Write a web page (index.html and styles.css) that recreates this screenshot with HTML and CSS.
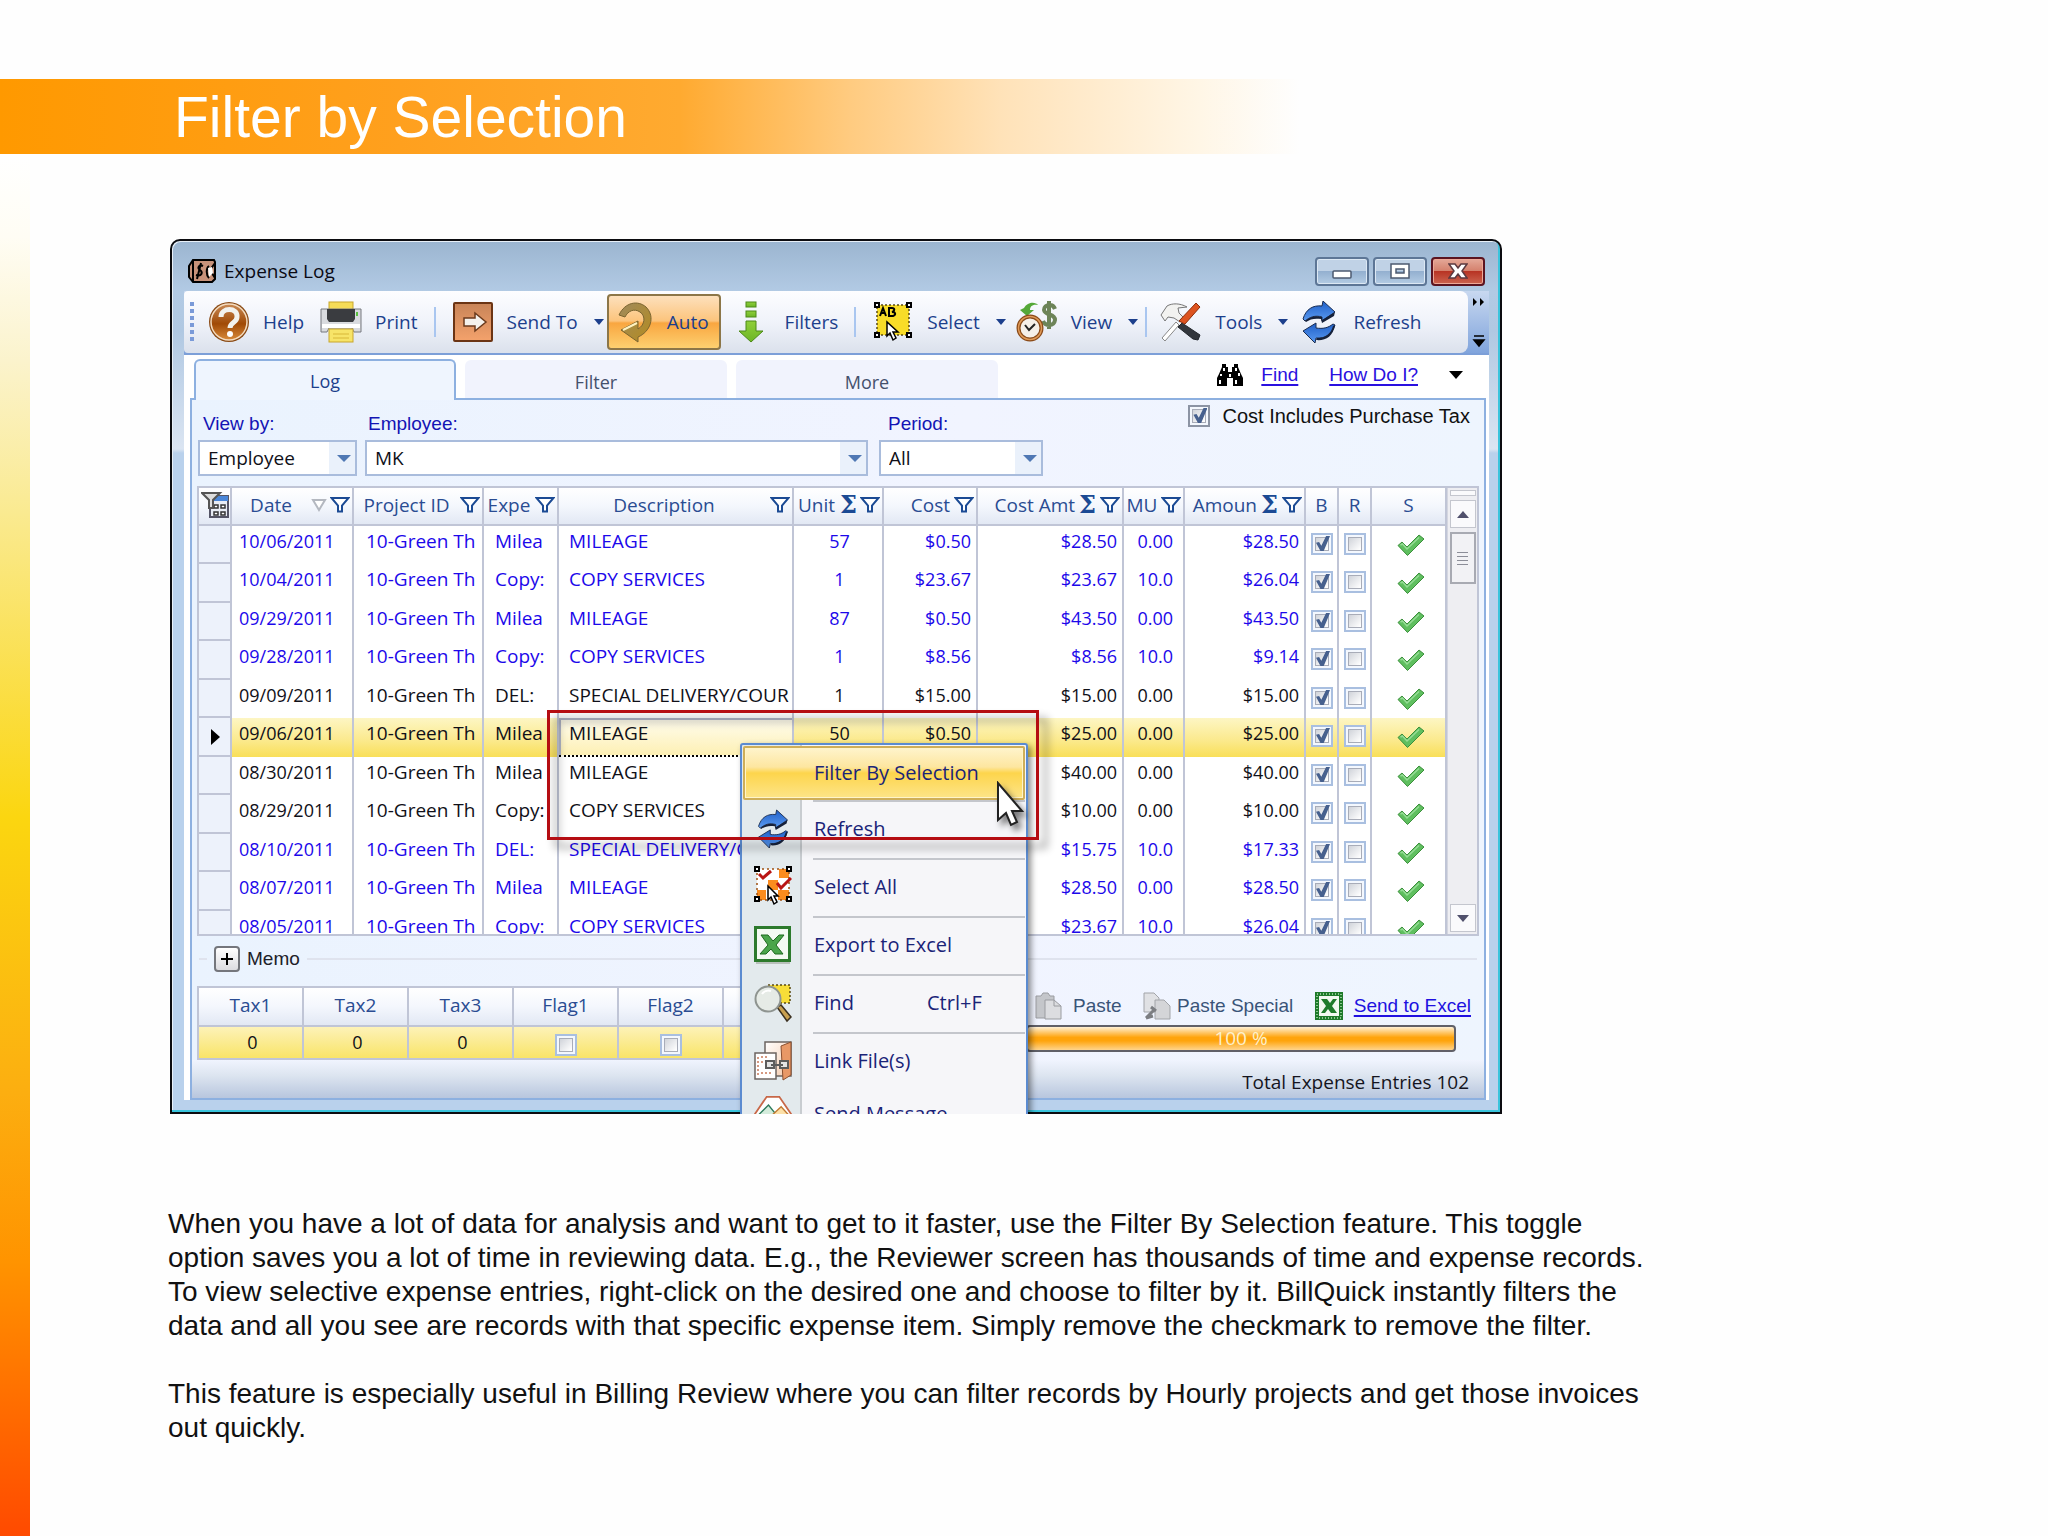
FILE: index.html
```html
<!DOCTYPE html>
<html lang="en">
<head>
<meta charset="utf-8">
<title>Filter by Selection</title>
<link rel="stylesheet" href="styles.css">
</head>
<body>
<svg class="defs" aria-hidden="true">
  <defs>
    <linearGradient id="g-brown" x1="0" y1="0" x2="0" y2="1"><stop offset="0" stop-color="#c98a55"/><stop offset=".55" stop-color="#a04a06"/><stop offset="1" stop-color="#d88a3a"/></linearGradient>
    <linearGradient id="g-copper" x1="0" y1="0" x2="0" y2="1"><stop offset="0" stop-color="#c88458"/><stop offset="1" stop-color="#f4a26c"/></linearGradient>
    <linearGradient id="g-gold" x1="0" y1="0" x2="1" y2="1"><stop offset="0" stop-color="#a08a5c"/><stop offset="1" stop-color="#b48c20"/></linearGradient>
    <linearGradient id="g-green" x1="0" y1="0" x2="0" y2="1"><stop offset="0" stop-color="#8fcf3a"/><stop offset="1" stop-color="#6db526"/></linearGradient>
    <linearGradient id="g-blue" x1="0" y1="0" x2="0" y2="1"><stop offset="0" stop-color="#1f5fc8"/><stop offset="1" stop-color="#5a9af0"/></linearGradient>
    <linearGradient id="g-page" x1="0" y1="0" x2="1" y2="1"><stop offset="0" stop-color="#ffffff"/><stop offset="1" stop-color="#f4c8a8"/></linearGradient>
  </defs>
  <symbol id="i-funnel" viewBox="0 0 20 18"><path d="M1.500 2H18.500L12 9.500V15.500H8V9.500Z" fill="#fff" stroke="#1b4a94" stroke-width="2"/></symbol>
  <symbol id="i-tick" viewBox="0 0 28 22"><path d="M1 11.500 5 8 10 13 22 1 27 5 10.500 21.500Z" fill="#5fbf5f" stroke="#3b8f3b" stroke-width="1"/><path d="M3.500 11 5.500 10 10 15 22 3.500" fill="none" stroke="#96dc96" stroke-width="1.500"/></symbol>
  <symbol id="i-refresh" viewBox="0 0 42 42">
    <path d="M5 18C8 8 15 4 24 5L25 0 37 11 24 20 24 16C17 14 12 16 7 20Z" fill="url(#g-blue)" stroke="#1a2c50" stroke-width="1"/>
    <path d="M7 20C12 16 17 14 24 16L24 19 37 11 36 15 24 22 23 18C17 17 12 18 8 21Z" fill="#16213a"/>
    <path d="M37 24C34 34 27 38 18 37L17 42 5 30 18 22 18 27C25 28 30 27 35 23Z" fill="url(#g-blue)" stroke="#1a2c50" stroke-width="1"/>
    <path d="M37 24C35 36 27 40 18 39L19 37C27 37 33 33 35 25Z" fill="#16213a"/>
  </symbol>
  <symbol id="i-excel" viewBox="0 0 38 38">
    <rect x="1.500" y="1.500" width="34" height="33" fill="#f4faf2" stroke="#2c7a2c" stroke-width="3"/>
    <path d="M7 9H14L19 15 25 9H30L22 19 29 28H21L17 23 12 28H6L14 19Z" fill="#4aa54a" stroke="#1f6a1f" stroke-width="1"/><path d="M2 37H36" stroke="#aab2aa" stroke-width="1.500"/>
  </symbol>
</svg>

<header class="banner"><h1>Filter by Selection</h1></header>

<main class="slide">
  <div class="stripe"></div>
  <div class="content">
    <figure class="shot">
      <section class="window">
        <div class="titlebar">
          <svg class="app-icon" viewBox="0 0 28 24"><path d="M5 1H26L27 3V20L24 23H5L1 18V7Z" fill="#c8927a" stroke="#000" stroke-width="2"/><path d="M5 2V22M21 7C18 9 18 16 21 19M27 4 22 11 27 19" fill="none" stroke="#000" stroke-width="2"/><path d="M15 7C11 5 9 9 12 11S14 18 8 16M13 4 9 20" fill="none" stroke="#000" stroke-width="2"/><path d="M20 9 24 8 25 14 21 18Z" fill="#fff"/></svg>
          <h2>Expense Log</h2>
          <div class="caption-buttons">
            <button type="button" aria-label="Minimize"><svg viewBox="0 0 20 20"><rect x="1" y="10" width="18" height="7" rx="1" fill="#fff" stroke="#4c5a70" stroke-width="1.500"/></svg></button>
            <button type="button" aria-label="Maximize"><svg viewBox="0 0 20 20"><path d="M1 3H19V17H1ZM6 8H14V12H6Z" fill="#fff" fill-rule="evenodd" stroke="#4c5a70" stroke-width="1.500"/></svg></button>
            <button type="button" class="close" aria-label="Close"><svg viewBox="0 0 20 20"><path d="M1 3H7L10 7 13 3H19L14 10 19 17H13L10 13 7 17H1L6 10Z" fill="#fff" stroke="#5c3a40" stroke-width="1.500"/></svg></button>
          </div>
        </div>

        <div class="client">
          <div class="toolbar">
            <div class="tools">
              <span class="grip"></span>
              <button type="button"><svg viewBox="0 0 42 42"><circle cx="21" cy="21" r="20" fill="#8a4a14"/><circle cx="21" cy="21" r="18" fill="url(#g-brown)" stroke="#f4dcc0" stroke-width="1.500"/><path d="M13 16C13 6 30 6 29 16 29 22 22 21 22 27" fill="none" stroke="#f2f2ee" stroke-width="5"/><circle cx="22" cy="33" r="3" fill="#fff"/></svg>Help</button>
              <button type="button"><svg viewBox="0 0 42 42"><rect x="9" y="1" width="24" height="10" fill="#f5dc58" stroke="#c8a62c"/><path d="M1 8H41V31H34L32 27H9L7 31H1Z" fill="#d9dbdf" stroke="#77797e"/><path d="M7 8H35V18L33 21H9L7 18Z" fill="#3a3c40"/><path d="M2 23H40V27H2Z" fill="#fff"/><rect x="9" y="28" width="24" height="13" fill="#f7e468" stroke="#c8a62c"/><path d="M13 33H29M13 37H29" stroke="#d8b838"/><rect x="36" y="11" width="2" height="4" fill="#5ac040"/></svg>Print</button>
              <span class="sep"></span>
              <button type="button" class="drop"><svg viewBox="0 0 42 42"><rect x="2" y="2" width="38" height="38" rx="1" fill="url(#g-copper)" stroke="#6b3414" stroke-width="2"/><path d="M12 17H23V12L34 21 23 30V25H12Z" fill="#f4f1ec" stroke="#6b3a1c" stroke-width="1.500"/></svg>Send To<i class="caret"></i></button>
              <button type="button" class="pressed"><svg viewBox="0 0 42 42"><path d="M5 14C11 1 24-1 32 6 42 16 36 31 24 36V41L7 29 24 20V28C31 24 32 15 26 11 20 7 14 10 11 16Z" fill="url(#g-gold)" stroke="#7a6430" stroke-width="1"/><path d="M9 29 23 22" stroke="#fff2c0" stroke-width="2"/></svg>Auto</button>
              <button type="button"><svg viewBox="0 0 42 42"><g fill="url(#g-green)" stroke="#4c8a18" stroke-width="1"><rect x="16" y="1" width="10" height="5"/><rect x="16" y="10" width="10" height="6"/><path d="M16 20H26V30H33L21 41 9 30H16Z"/></g></svg>Filters</button>
              <span class="sep"></span>
              <button type="button" class="drop"><svg viewBox="0 0 42 42"><rect x="5" y="4" width="32" height="30" fill="#f8dc28"/><rect x="5" y="4" width="32" height="30" fill="none" stroke="#5a4a10" stroke-width="1.500" stroke-dasharray="2 2"/><path d="M8 15 11 7 14 15M9 12H13M17 7V15H21C24 14 24 11 20 11 23 10 23 7 20 7Z" fill="none" stroke="#000" stroke-width="2"/><g fill="#fff" stroke="#000" stroke-width="2"><rect x="3" y="2" width="4" height="4"/><rect x="35" y="2" width="4" height="4"/><rect x="3" y="32" width="4" height="4"/><rect x="35" y="32" width="4" height="4"/></g><path d="M15 21V35L18 32 21 39 24 37 21 31H26Z" fill="#fff" stroke="#000" stroke-width="1.500"/></svg>Select<i class="caret"></i></button>
              <button type="button" class="drop"><svg viewBox="0 0 42 42"><path d="M39 8C37 2 28 3 28 9 29 15 39 12 39 19 38 26 29 25 27 20M33 0V28" fill="none" stroke="#6d8458" stroke-width="4"/><path d="M8 7C12 0 20 1 22 4 16 3 14 6 14 9H18L11 15 4 9Z" fill="#55a838"/><circle cx="14" cy="27" r="11.500" fill="#f5efe8" stroke="#8a4a18" stroke-width="4"/><circle cx="14" cy="27" r="11.500" fill="none" stroke="#e09a58" stroke-width="1.500"/><path d="M9 24 13 29 19 23" fill="none" stroke="#222" stroke-width="2"/></svg>View<i class="caret"></i></button>
              <span class="sep tight"></span>
              <button type="button" class="drop"><svg viewBox="0 0 42 42"><path d="M5 40 2 37 16 21 19 24Z" fill="#fff" stroke="#888"/><path d="M1 14 7 5C12 2 20 2 27 6L18 7 19 12 24 17 20 21 14 17 8 16 5 20Z" fill="#f2f2f0" stroke="#777"/><path d="M22 22 40 34 38 39 33 38 18 26Z" fill="#32363c" stroke="#22262c"/><path d="M36 2 40 6 25 23 19 20Z" fill="#dd5320" stroke="#8c2c08"/></svg>Tools<i class="caret"></i></button>
              <button type="button"><svg><use href="#i-refresh"/></svg>Refresh</button>
            </div>
            <button type="button" class="overflow" aria-label="More buttons"><svg viewBox="0 0 14 10"><path d="M1 1 5 5 1 9ZM8 1 12 5 8 9Z" fill="#000"/></svg><svg viewBox="0 0 14 14"><path d="M2 2H12M2 6 7 12 12 6Z" fill="#000" stroke="#000" stroke-width="1.500"/></svg></button>
          </div>

          <div class="tabbar">
            <button type="button" class="tab active">Log</button>
            <button type="button" class="tab">Filter</button>
            <button type="button" class="tab">More</button>
            <nav class="help-links">
              <svg viewBox="0 0 28 24"><path d="M6 1H10V4H12V9H16V4H18V1H22V4L25 11 27 15V23H17V15H11V23H1V15L3 11 6 4Z" fill="#000"/><path d="M5 11V13M8 5V8M20 5V8M14 11V14M4 17V21M20 17V21M23 10V13" stroke="#fff" stroke-width="2"/></svg>
              <a href="#find">Find</a>
              <a href="#how">How Do I?</a>
              <i class="caret black"></i>
            </nav>
          </div>

          <div class="panel">
            <div class="criteria">
              <div class="field by"><label for="viewby">View by:</label><div class="combo"><select id="viewby"><option>Employee</option></select></div></div>
              <div class="field emp"><label for="employee">Employee:</label><div class="combo"><select id="employee"><option>MK</option></select></div></div>
              <div class="field period"><label for="period">Period:</label><div class="combo"><select id="period"><option>All</option></select></div></div>
              <label class="tax-check"><input type="checkbox" checked>Cost Includes Purchase Tax</label>
            </div>

            <div class="grid">
              <table class="log">
                <colgroup><col class="c-sel"><col class="c-date"><col class="c-proj"><col class="c-exp"><col class="c-desc"><col class="c-unit"><col class="c-cost"><col class="c-amt"><col class="c-mu"><col class="c-total"><col class="c-flag"><col class="c-flag"><col class="c-s"></colgroup>
                <thead>
                  <tr>
                    <th><svg class="chooser" viewBox="0 0 28 28"><rect x="9" y="5" width="18" height="21" fill="#e8ecf4" stroke="#556" stroke-width="2"/><rect x="10" y="5" width="17" height="5" fill="#4a86d8"/><path d="M13 14H17V17H13ZM20 14H24V17H20ZM13 21H17V24H13ZM20 21H24V24H20Z" fill="#fff" stroke="#333" stroke-width="1.500"/><path d="M1 2H19L12 9V17H8V9Z" fill="#ddd" stroke="#555" stroke-width="2"/></svg></th>
                    <th><div class="head"><span>Date</span><svg class="sort" viewBox="0 0 16 14"><path d="M2 2H14L8 12Z" fill="#fff" stroke="#b4b8c0" stroke-width="2"/></svg><svg><use href="#i-funnel"/></svg></div></th>
                    <th><div class="head"><span>Project ID</span><svg><use href="#i-funnel"/></svg></div></th>
                    <th><div class="head"><span>Expe</span><svg><use href="#i-funnel"/></svg></div></th>
                    <th><div class="head"><span>Description</span><svg><use href="#i-funnel"/></svg></div></th>
                    <th><div class="head"><span>Unit</span><b>Σ</b><svg><use href="#i-funnel"/></svg></div></th>
                    <th><div class="head end"><span>Cost</span><svg><use href="#i-funnel"/></svg></div></th>
                    <th><div class="head end"><span>Cost Amt</span><b>Σ</b><svg><use href="#i-funnel"/></svg></div></th>
                    <th><div class="head"><span>MU</span><svg><use href="#i-funnel"/></svg></div></th>
                    <th><div class="head end"><span>Amoun</span><b>Σ</b><svg><use href="#i-funnel"/></svg></div></th>
                    <th>B</th><th>R</th><th>S</th>
                  </tr>
                </thead>
                <tbody>
                  <tr class="billed"><td></td><td>10/06/2011</td><td>10-Green Th</td><td>Milea</td><td>MILEAGE</td><td>57</td><td>$0.50</td><td>$28.50</td><td>0.00</td><td>$28.50</td><td><input type="checkbox" aria-label="B" checked></td><td><input type="checkbox" aria-label="R"></td><td><svg><use href="#i-tick"/></svg></td></tr>
                  <tr class="billed"><td></td><td>10/04/2011</td><td>10-Green Th</td><td>Copy:</td><td>COPY SERVICES</td><td>1</td><td>$23.67</td><td>$23.67</td><td>10.0</td><td>$26.04</td><td><input type="checkbox" aria-label="B" checked></td><td><input type="checkbox" aria-label="R"></td><td><svg><use href="#i-tick"/></svg></td></tr>
                  <tr class="billed"><td></td><td>09/29/2011</td><td>10-Green Th</td><td>Milea</td><td>MILEAGE</td><td>87</td><td>$0.50</td><td>$43.50</td><td>0.00</td><td>$43.50</td><td><input type="checkbox" aria-label="B" checked></td><td><input type="checkbox" aria-label="R"></td><td><svg><use href="#i-tick"/></svg></td></tr>
                  <tr class="billed"><td></td><td>09/28/2011</td><td>10-Green Th</td><td>Copy:</td><td>COPY SERVICES</td><td>1</td><td>$8.56</td><td>$8.56</td><td>10.0</td><td>$9.14</td><td><input type="checkbox" aria-label="B" checked></td><td><input type="checkbox" aria-label="R"></td><td><svg><use href="#i-tick"/></svg></td></tr>
                  <tr><td></td><td>09/09/2011</td><td>10-Green Th</td><td>DEL:</td><td>SPECIAL DELIVERY/COUR</td><td>1</td><td>$15.00</td><td>$15.00</td><td>0.00</td><td>$15.00</td><td><input type="checkbox" aria-label="B" checked></td><td><input type="checkbox" aria-label="R"></td><td><svg><use href="#i-tick"/></svg></td></tr>
                  <tr class="current"><td><i class="marker"></i></td><td>09/06/2011</td><td>10-Green Th</td><td>Milea</td><td class="focus">MILEAGE</td><td>50</td><td>$0.50</td><td>$25.00</td><td>0.00</td><td>$25.00</td><td><input type="checkbox" aria-label="B" checked></td><td><input type="checkbox" aria-label="R"></td><td><svg><use href="#i-tick"/></svg></td></tr>
                  <tr><td></td><td>08/30/2011</td><td>10-Green Th</td><td>Milea</td><td>MILEAGE</td><td></td><td></td><td>$40.00</td><td>0.00</td><td>$40.00</td><td><input type="checkbox" aria-label="B" checked></td><td><input type="checkbox" aria-label="R"></td><td><svg><use href="#i-tick"/></svg></td></tr>
                  <tr><td></td><td>08/29/2011</td><td>10-Green Th</td><td>Copy:</td><td>COPY SERVICES</td><td></td><td></td><td>$10.00</td><td>0.00</td><td>$10.00</td><td><input type="checkbox" aria-label="B" checked></td><td><input type="checkbox" aria-label="R"></td><td><svg><use href="#i-tick"/></svg></td></tr>
                  <tr class="billed"><td></td><td>08/10/2011</td><td>10-Green Th</td><td>DEL:</td><td>SPECIAL DELIVERY/COUR</td><td></td><td></td><td>$15.75</td><td>10.0</td><td>$17.33</td><td><input type="checkbox" aria-label="B" checked></td><td><input type="checkbox" aria-label="R"></td><td><svg><use href="#i-tick"/></svg></td></tr>
                  <tr class="billed"><td></td><td>08/07/2011</td><td>10-Green Th</td><td>Milea</td><td>MILEAGE</td><td></td><td></td><td>$28.50</td><td>0.00</td><td>$28.50</td><td><input type="checkbox" aria-label="B" checked></td><td><input type="checkbox" aria-label="R"></td><td><svg><use href="#i-tick"/></svg></td></tr>
                  <tr class="billed"><td></td><td>08/05/2011</td><td>10-Green Th</td><td>Copy:</td><td>COPY SERVICES</td><td></td><td></td><td>$23.67</td><td>10.0</td><td>$26.04</td><td><input type="checkbox" aria-label="B" checked></td><td><input type="checkbox" aria-label="R"></td><td><svg><use href="#i-tick"/></svg></td></tr>
                </tbody>
              </table>
              <div class="scrollbar">
                <span class="split"></span>
                <button type="button" class="up" aria-label="Scroll up"></button>
                <span class="thumb"></span>
                <button type="button" class="down" aria-label="Scroll down"></button>
              </div>
            </div>

            <div class="memo"><button type="button" aria-label="Expand memo"><svg viewBox="0 0 16 16"><path d="M8 2V14M2 8H14" stroke="#000" stroke-width="2"/></svg></button><span>Memo</span></div>

            <div class="lower">
              <table class="taxes">
                <thead><tr><th>Tax1</th><th>Tax2</th><th>Tax3</th><th>Flag1</th><th>Flag2</th><th></th></tr></thead>
                <tbody><tr><td>0</td><td>0</td><td>0</td><td class="flag"><input type="checkbox" aria-label="Flag1"></td><td class="flag"><input type="checkbox" aria-label="Flag2"></td><td></td></tr></tbody>
              </table>
              <div class="export">
                <div class="actions">
                  <button type="button" class="wide"><svg viewBox="0 0 28 28"><path d="M2 4H7L9 1H14L16 4H20V26H2Z" fill="#c4c6ca" stroke="#9a9ca0"/><path d="M11 8H20L27 14V27H11Z" fill="#dcdde0" stroke="#9a9ca0"/><path d="M20 8V14H27" fill="none" stroke="#9a9ca0"/></svg>Paste</button>
                  <button type="button"><svg viewBox="0 0 28 28"><path d="M1 1H11L16 6V20H1Z" fill="#e0e1e4" stroke="#a2a4a8"/><path d="M12 8H21L27 14V27H12Z" fill="#d4d5d8" stroke="#a2a4a8"/><path d="M3 26 12 17M3 26 10 24M8 15 13 19" stroke="#7c7e82" stroke-width="3"/></svg>Paste Special</button>
                  <a class="wide" href="#excel"><svg viewBox="0 0 28 28"><rect x="2" y="2" width="24" height="24" fill="#f2f8f0" stroke="#1f7a2a" stroke-width="4"/><rect x="2" y="2" width="24" height="24" fill="none" stroke="#8cc890" stroke-width="2" stroke-dasharray="1 2"/><path d="M6 7H12L15 11 18 7H22L17 14 22 21H16L13 17 10 21H6L11 14Z" fill="#1f7a2a"/></svg><span>Send to Excel</span></a>
                </div>
                <div class="progress" role="progressbar" aria-label="Loaded" aria-valuenow="100">100 %</div>
              </div>
            </div>

            <div class="status">Total Expense Entries 102</div>
          </div>
        </div>
      </section>

      <div class="menu" role="menu">
        <button type="button" role="menuitem" class="hot"><span>Filter By Selection</span></button>
        <button type="button" role="menuitem"><svg><use href="#i-refresh"/></svg><span>Refresh</span></button>
        <button type="button" role="menuitem"><svg viewBox="0 0 38 42"><rect x="3" y="3" width="32" height="31" fill="#fff"/><path d="M25 3H35V12H25ZM14 14H24V24H14ZM3 24H12V34H3ZM24 24H35V34H24Z" fill="#fb8c1e"/><rect x="3" y="3" width="32" height="31" fill="none" stroke="#a05010" stroke-dasharray="2 3" stroke-width="1.500"/><g fill="#fff" stroke="#000" stroke-width="2"><rect x="1" y="1" width="4" height="4"/><rect x="33" y="1" width="4" height="4"/><rect x="1" y="31" width="4" height="4"/><rect x="33" y="31" width="4" height="4"/></g><path d="M5 8 9 12 17 5M23 17 27 22 37 12" fill="none" stroke="#b81414" stroke-width="3"/><path d="M14 20V34L17 31 20 38 23 36 20 30H24Z" fill="#fff" stroke="#000" stroke-width="1.500"/></svg><span>Select All</span></button>
        <button type="button" role="menuitem"><svg><use href="#i-excel"/></svg><span>Export to Excel</span></button>
        <button type="button" role="menuitem"><svg viewBox="0 0 38 42"><rect x="14" y="3" width="22" height="18" fill="#f8de38" stroke="#5a4a10" stroke-width="1.500" stroke-dasharray="2 2"/><path d="M23 25 27 23 37 35 33 39Z" fill="#c8a050" stroke="#3a3020" stroke-width="1.500"/><circle cx="14" cy="17" r="12.500" fill="#e6ebe6" stroke="#8e9490" stroke-width="2"/><path d="M8 12C10 9 14 8 17 9" stroke="#fff" stroke-width="2" fill="none"/></svg><span>Find</span><kbd>Ctrl+F</kbd></button>
        <button type="button" role="menuitem"><svg viewBox="0 0 38 42"><path d="M11 2H37V36H11Z" fill="url(#g-page)" stroke="#6c6460" stroke-width="1.500"/><path d="M27 6 37 2V35L29 40Z" fill="#e89866" stroke="#8a5030"/><path d="M1 13H22V39H1Z" fill="#fff" stroke="#6c6460" stroke-width="1.500"/><path d="M4 17V36M7 17H13M7 22H12M7 33H17" stroke="#c87858" stroke-width="1.500" stroke-dasharray="2 2"/><path d="M12 21H20V28H12ZM26 21H34V28H26ZM17 25H29" fill="#e4e4e4" stroke="#5c5c5c" stroke-width="2"/></svg><span>Link File(s)</span></button>
        <button type="button" role="menuitem" class="last"><svg viewBox="0 0 42 42"><path d="M1 21 14 2H28L41 21V40H1Z" fill="#fff" stroke="#c86848" stroke-width="2"/><path d="M3 24 16 11 28 26Z" fill="#d4ecdc" stroke="#2c7a5a" stroke-width="1.500"/><path d="M16 26 30 13 40 24 38 34Z" fill="#fce0a8" stroke="#c07830" stroke-width="1.500"/></svg><span>Send Message</span></button>
      </div>
      <div class="callout"></div>
      <svg class="pointer" viewBox="0 0 28 46"><path d="M2 2V39L10 32 15 44 21 41 16 30H26Z" fill="#fff" stroke="#222" stroke-width="2"/></svg>
    </figure>

    <div class="text">
      <p>When you have a lot of data for analysis and want to get to it faster, use the Filter By Selection feature. This toggle option saves you a lot of time in reviewing data. E.g., the Reviewer screen has thousands of time and expense records. To view selective expense entries, right-click on the desired one and choose to filter by it. BillQuick instantly filters the data and all you see are records with that specific expense item. Simply remove the checkmark to remove the filter.</p>
      <p>This feature is especially useful in Billing Review where you can filter records by Hourly projects and get those invoices out quickly.</p>
    </div>
  </div>
</main>
</body>
</html>
```
FILE: styles.css
```css
* { box-sizing: border-box; }

body {
  margin: 0;
  min-height: 100vh;
  display: flex;
  flex-direction: column;
  background: #fefefe;
  color: #111;
  font-family: "Liberation Sans", Arial, sans-serif;
}

button { font: inherit; color: inherit; margin: 0; padding: 0; border: 0; background: none; }
svg { display: block; flex: none; }
.defs { position: absolute; width: 0; height: 0; }

/* slide frame */
.banner {
  margin-top: 79px;
  height: 75px;
  padding-left: 174px;
  display: flex;
  align-items: center;
  background: linear-gradient(90deg, #f90 0, #ffa01e 400px, #ffaa30 680px, #ffcb80 850px, #ffe2b8 1000px, #fff6e6 1200px, #fefefe 1300px);
}
.banner h1 { margin: 0; font-size: 57px; line-height: 64px; font-weight: 400; color: #fff; }
.slide { flex: 1; display: flex; }
.stripe {
  flex: none;
  width: 30px;
  background: linear-gradient(#fff 0, #fffdf4 6%, #fbf3cc 15%, #faea90 26%, #fbd610 48%, #fcae10 68%, #ff9400 80%, #ff4a00 100%);
}
.content { flex: 1; min-width: 0; padding: 85px 40px 40px 138px; }
.text { max-width: 1488px; margin-top: 93px; font-size: 28px; line-height: 34px; }
.text p { margin: 0 0 34px; }

/* application window */
.shot {
  position: relative;
  overflow: hidden;
  max-width: 1332px;
  margin: 0 0 0 2px;
  font-family: "Open Sans", "Noto Sans", sans-serif;
  font-size: 19px;
  line-height: 24px;
}
.window {
  padding: 0 11px 12px 12px;
  border: 2px solid #0c0c10;
  border-radius: 10px 10px 0 0;
  box-shadow: inset -2px -2px #3ac4dc, inset 1px 1px #e8f0f8;
  background: linear-gradient(#9bb5d0 0, #b2cae4 50px, #b0c8e2 90px, #dbe5f2 208px, #b9d1ec 212px, #b9d1ec 100%);
}
.titlebar { height: 50px; padding: 10px 4px 0; display: flex; align-items: center; gap: 8px; }
.titlebar h2 { margin: 0; font-size: 19px; font-weight: 400; color: #0a0a14; }
.app-icon { width: 28px; height: 24px; }
.caption-buttons { margin-left: auto; display: flex; gap: 4px; }
.caption-buttons button {
  width: 54px;
  height: 29px;
  display: grid;
  place-items: center;
  border: 2px solid #5d7696;
  border-radius: 4px;
  box-shadow: inset 0 0 0 1px #dce8f4;
  background: linear-gradient(#c0d2e6 0 48%, #94b0d0 50%, #b4cce4);
}
.caption-buttons svg { width: 20px; height: 20px; }
.caption-buttons .close {
  border-color: #5c1420;
  box-shadow: inset 0 0 0 1px #eea898;
  background: linear-gradient(#e4a898 0, #d4806c 48%, #b83424 50%, #cc6450);
}
.client { background: #fff; }

.toolbar { height: 64px; display: flex; border-bottom: 2px solid #7c9fd8; background: linear-gradient(#c8d8f0, #80a4dc); color: #1c3f8c; }
.tools {
  flex: 1;
  min-width: 0;
  display: flex;
  align-items: center;
  gap: 2px;
  padding: 3px 0 3px 6px;
  border-radius: 4px 8px 8px 4px;
  background: linear-gradient(#fdfdff, #f0f3fa 50%, #dbe1ec);
}
.tools button { height: 56px; display: flex; align-items: center; gap: 13px; padding: 0 7px; white-space: nowrap; }
.tools button svg { width: 42px; height: 42px; }
.tools .drop { padding-right: 1px; }
.tools .pressed { border: 2px solid #8c7648; border-radius: 4px; padding: 0 10px 0 5px; gap: 11px; background: linear-gradient(#fde0bc 0, #fcc47c 48%, #f9a640 52%, #fdd070); }
.grip { width: 4px; height: 40px; margin-right: 5px; background: repeating-linear-gradient(#7a9ad8 0 4px, transparent 4px 7px); }
.sep { width: 2px; height: 30px; margin: 0 7px; background: #a9c6f0; }
.sep.tight { margin: 0 4px; }
.caret { width: 0; height: 0; border: 5px solid transparent; border-top: 6px solid #1c3f8c; border-bottom: 0; margin-left: 3px; }
.caret.black { border-width: 7px; border-top-width: 8px; border-bottom-width: 0; border-top-color: #000; margin: 0; }
.overflow { width: 21px; display: flex; flex-direction: column; justify-content: space-between; align-items: center; padding: 6px 0 5px; }
.overflow svg { width: 14px; }
.overflow svg:first-child { height: 10px; }
.overflow svg:last-child { height: 14px; }

.tabbar { height: 43px; display: flex; align-items: flex-end; gap: 9px; padding: 0 26px 0 10px; }
.tab { width: 262px; height: 38px; padding-top: 5px; border-radius: 6px 6px 0 0; background: #f1f3fd; font-size: 18px; color: #44506c; }
.tab.active { position: relative; z-index: 1; height: 41px; margin-bottom: -2px; padding-top: 1px; border: 2px solid #8db0e0; border-bottom: 0; background: #eff5fe; color: #1c3f8c; }
.help-links { margin-left: auto; align-self: flex-start; padding-top: 8px; display: flex; align-items: center; font-family: "Liberation Sans", Arial, sans-serif; }
.help-links svg { width: 28px; height: 24px; margin-right: 17px; }
.help-links a { margin-right: 31px; color: #2a10e0; }
a { text-underline-offset: 3px; text-decoration-thickness: 2px; }

.panel {
  margin: 0 3px 0 6px;
  border: 2px solid #8db0e0;
  background: linear-gradient(90deg, #eaf3fe, #f1f4ff 60%, #eef5fe);
}
.criteria { display: flex; padding: 12px 14px 10px 6px; }
.field label { display: block; margin-bottom: 4px; font-family: "Liberation Sans", Arial, sans-serif; color: #1414b4; }
.by { width: 159px; margin-right: 8px; }
.emp { width: 503px; margin-right: 11px; }
.period { width: 164px; }
.by label { padding-left: 5px; }
.emp label { padding-left: 3px; }
.period label { padding-left: 9px; }
.combo { position: relative; }
.combo select { display: block; width: 100%; height: 36px; padding: 0 8px; appearance: none; border: 2px solid #a9bcdc; border-radius: 0; background: linear-gradient(90deg, #fff calc(100% - 26px), #eaf1fb 0); font: inherit; color: #101018; }
.combo::after { content: ""; position: absolute; right: 6px; top: 15px; border: 7px solid transparent; border-top: 7px solid #4f78b4; border-bottom: 0; }
.tax-check { margin: -7px 0 0 auto; align-self: flex-start; display: flex; align-items: center; gap: 12px; font: 20px/22px "Liberation Sans", Arial, sans-serif; }

input[type="checkbox"] {
  appearance: none;
  display: block;
  width: 22px;
  height: 22px;
  margin: 0;
  border: 2px solid #a9bfe0;
  background: linear-gradient(135deg, #c4c8d0, #fff 80%);
  box-shadow: inset 0 0 0 2px #f4f8fe, inset 0 0 0 3px #a8acb8;
}
input[type="checkbox"]:checked::before { content: ""; display: block; width: 14px; height: 15px; margin: 1px 0 0 3px; background: #46608e; clip-path: polygon(0 45%, 22% 40%, 38% 65%, 72% 0, 100% 0, 55% 100%, 32% 100%); }
.tax-check input { border-color: #8c94a4; }

/* expense grid */
.grid { height: 450px; margin: 0 5px; display: flex; overflow: hidden; border: 2px solid #c0c5d6; background: #fff; }
.log { flex: 1; width: 100%; table-layout: fixed; border-spacing: 0; border-collapse: separate; font-size: 18px; align-self: flex-start; }
.c-sel, .c-flag { width: 33px; }
.c-date { width: 122px; }
.c-proj { width: 130px; }
.c-exp, .c-s { width: 75px; }
.c-unit { width: 90px; }
.c-cost { width: 94px; }
.c-amt { width: 146px; }
.c-mu { width: 61px; }
.c-total { width: 121px; }
.log th, .taxes th { height: 38px; padding: 0 0 2px; border-right: 2px solid #c0c5d6; border-bottom: 2px solid #c0c5d6; background: linear-gradient(#fff, #f4f7fd 50%, #e2e8f4); color: #2a4c92; font-size: 19px; font-weight: 400; white-space: nowrap; }
.head { display: flex; align-items: center; gap: 3px; padding: 0 2px; }
.head span { flex: 1; }
.head.end { gap: 4px; }
.head.end span { text-align: right; }
.head svg { width: 20px; height: 18px; }
.head .sort { width: 16px; height: 14px; }
.head b { font: 700 24px/22px "DejaVu Serif", serif; color: #1b4a94; }
.chooser { width: 28px; height: 28px; margin-left: 2px; }
.log td { height: 38px; padding: 0; vertical-align: top; line-height: 30px; border-right: 2px solid #c0c5d6; white-space: nowrap; overflow: hidden; color: #101018; }
.log tr:nth-child(even) td { height: 39px; }
.log .billed td { color: #1c08ea; }
.log td:nth-child(1) { border-bottom: 2px solid #c0c5d6; background: #edf2fb; }
.log td:nth-child(2) { padding-left: 7px; }
.log td:nth-child(3) { padding-left: 12px; font-size: 19px; }
.log td:nth-child(4) { padding-left: 11px; font-size: 19px; }
.log td:nth-child(5) { padding-left: 10px; font-size: 19px; }
.log td:nth-child(6) { text-align: center; padding-left: 3px; }
.log td:nth-child(7), .log td:nth-child(8), .log td:nth-child(10) { text-align: right; padding-right: 5px; }
.log td:nth-child(9) { text-align: right; padding-right: 10px; }
.log td input { margin: 7px 0 0 5px; }
.log td svg { width: 28px; height: 22px; margin: 8px 0 0 25px; }
.log .current td:not(:first-child) { background: linear-gradient(#fdf6c4, #fbe98a 60%, #f9df58); }
.log .current .focus:not(:first-child) { background: linear-gradient(#fffdf0, #fdf0b4); border-bottom: 2px dotted #000; box-shadow: inset 2px 2px #b0b4c4; }
.marker { display: block; margin: 11px 0 0 12px; width: 0; height: 0; border: 8px solid transparent; border-left: 9px solid #000; border-right: 0; }

.scrollbar { flex: none; width: 30px; display: flex; flex-direction: column; align-items: center; background: #eeeef2; border-left: 1px solid #d4d6e0; padding: 2px 0; }
.scrollbar > * { width: 26px; flex: none; border: 1px solid #c4c6ce; background: #fafafc; }
.split { height: 6px; }
.up, .down { height: 28px; display: grid; place-items: center; }
.up { margin-top: 4px; }
.up::after { content: ""; border: 6px solid transparent; border-bottom: 7px solid #50506c; border-top: 0; }
.down::after { content: ""; border: 6px solid transparent; border-top: 7px solid #50506c; border-bottom: 0; }
.scrollbar .thumb { height: 52px; margin-top: 4px; border: 2px solid #a8aab2; background: repeating-linear-gradient(#8c8e98 0 1px, #f2f2f5 1px 4px) center / 11px 13px no-repeat #f2f2f5; }
.down { margin-top: auto; }

.memo { height: 50px; margin: 0 7px; padding-bottom: 4px; display: flex; align-items: center; gap: 7px; font: 19px/24px "Liberation Sans", Arial, sans-serif; color: #202028; }
.memo::before, .memo::after { content: ""; height: 2px; background: #dfe3ee; }
.memo::before { width: 8px; }
.memo::after { flex: 1; }
.memo button { width: 26px; height: 26px; display: grid; place-items: center; border: 2px solid #74767c; border-radius: 4px; background: linear-gradient(#fff, #dcdce0); }
.memo svg { width: 16px; height: 16px; }

.lower { display: flex; justify-content: space-between; margin: 0 5px; height: 74px; }
.taxes { flex: none; width: 632px; height: 73px; table-layout: fixed; border-spacing: 0; border: 2px solid #c0c5d6; border-right: 0; font-size: 18px; }
.taxes th { height: 39px; padding-bottom: 3px; }
.taxes td { height: 31px; padding: 0 0 2px 4px; text-align: center; border-right: 2px solid #c0c5d6; background: linear-gradient(#fdf2b8, #f9e468); color: #101018; line-height: 22px; }
.taxes .flag { padding-left: 0; }
.taxes input { margin: 6px auto 0; }
.export { width: 453px; display: flex; flex-direction: column; }
.actions { height: 39px; padding: 0 8px 0 8px; display: flex; align-items: center; justify-content: space-between; font-family: "Liberation Sans", Arial, sans-serif; color: #3a5478; white-space: nowrap; }
.actions > * { display: flex; align-items: center; gap: 6px; text-decoration: none; }
.actions .wide { gap: 11px; }
.actions a { color: #2010e0; }
.actions a span { text-decoration: underline; text-underline-offset: 3px; text-decoration-thickness: 2px; }
.actions svg { width: 28px; height: 28px; }
.progress { width: 430px; height: 27px; border: 2px solid #606068; border-radius: 4px; background: linear-gradient(#fff0d4, #ffa40c 45%, #ffa40c 60%, #ffd48c); text-align: center; line-height: 23px; color: #fdf0cc; }
.status { height: 38px; padding: 0 15px 0 0; text-align: right; line-height: 44px; color: #141420; background: linear-gradient(#f0f4fe, #dde5f0 40%, #b8c6de); }

/* context menu over the window */
.menu {
  position: absolute;
  left: 570px;
  top: 504px;
  width: 288px;
  height: 420px;
  padding: 1px;
  border: 2px solid #5b8bd0;
  border-radius: 3px;
  box-shadow: 3px 3px 6px rgba(0, 0, 0, .45);
  background: linear-gradient(90deg, #e3eaed 0 58px, #c8ccd0 58px 60px, #f6f6f9 60px);
  color: #1a2478;
  font-size: 20px;
}
.menu button { position: relative; width: 100%; height: 58px; display: grid; grid-template-columns: 58px 113px 1fr; align-items: center; padding: 0 0 0 1px; text-align: left; white-space: nowrap; }
.menu button span { padding-left: 12px; }
.menu button:not(.hot, .last)::before { content: ""; position: absolute; left: 70px; right: 0; top: 0; height: 2px; background: #c4c6cc; }
.menu svg { width: 38px; height: 42px; margin-left: 10px; }
.menu kbd { font: inherit; padding-left: 12px; }
.menu .hot { display: block; height: 54px; border: 2px solid #cfae58; border-radius: 2px; box-shadow: inset 0 0 0 1px #fff4c8; background: linear-gradient(#fff4cc 0, #fde6a0 38%, #fdd54c 50%, #fde488); }
.menu .hot span { padding-left: 68px; }
.menu .last { height: 48px; }

.callout { position: absolute; left: 377px; top: 471px; width: 492px; height: 130px; border: 3px solid #b50d12; filter: drop-shadow(8px 8px 4px rgba(0, 0, 0, .45)); }
.pointer { position: absolute; left: 826px; top: 542px; width: 28px; height: 46px; filter: drop-shadow(4px 5px 3px rgba(0, 0, 0, .5)); }
```
